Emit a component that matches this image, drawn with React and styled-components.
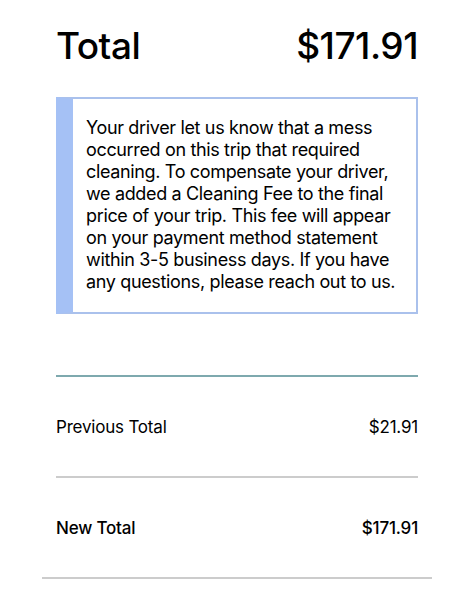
import React from 'react'
import styled, { createGlobalStyle } from 'styled-components'

const GlobalStyle = createGlobalStyle`
  html, body {
    margin: 0;
    padding: 0;
    background: #ffffff;
  }
  body {
    font-family: Inter, "Noto Sans", "Liberation Sans", sans-serif;
    color: #000000;
  }
`

//#region styled components
const Page = styled('div')`
  width: 474px;
  height: 596px;
  overflow: hidden;
  background: #ffffff;
`

const Header = styled('div')`
  display: flex;
  justify-content: space-between;
  align-items: center;
  height: 90px;
  padding: 0 56px;
`

const HeaderText = styled('div')`
  font-size: 37px;
  font-weight: 500;
  letter-spacing: -0.5px;
`

const Notice = styled('div')`
  margin: 7px 56px 0;
  border: 2px solid #aac1ec;
  border-left: 17px solid #a5c1f5;
  padding: 18px 10px 19px 13px;
  font-size: 18px;
  line-height: 22px;
  letter-spacing: -0.35px;
`

const Spacer = styled('div')`
  height: ${p => p.$h}px;
`

const Divider = styled('div')`
  height: ${p => p.$thick || 2}px;
  background: ${p => p.$color || '#cccccc'};
  margin: 0 ${p => p.$inset || 56}px;
`

const Row = styled('div')`
  display: flex;
  justify-content: space-between;
  align-items: center;
  height: 99px;
  padding: 0 56px;
  font-size: 17px;
  letter-spacing: -0.2px;
  font-weight: ${p => (p.$strong ? 500 : 400)};
`
//#endregion

const App = () => {
  return (
    <Page>
      <GlobalStyle />
      <Header>
        <HeaderText>Total</HeaderText>
        <HeaderText>$171.91</HeaderText>
      </Header>
      <Notice>
        Your driver let us know that a mess occurred on this trip that required
        cleaning. To compensate your driver, we added a Cleaning Fee to the final
        price of your trip. This fee will appear on your payment method statement
        within 3-5 business days. If you have any questions, please reach out to us.
      </Notice>
      <Spacer $h={61} />
      <Divider $color="#7ea9ae" />
      <Row>
        <span>Previous Total</span>
        <span>$21.91</span>
      </Row>
      <Divider />
      <Row $strong>
        <span>New Total</span>
        <span>$171.91</span>
      </Row>
      <Divider $inset={42} />
    </Page>
  )
}

export default App
